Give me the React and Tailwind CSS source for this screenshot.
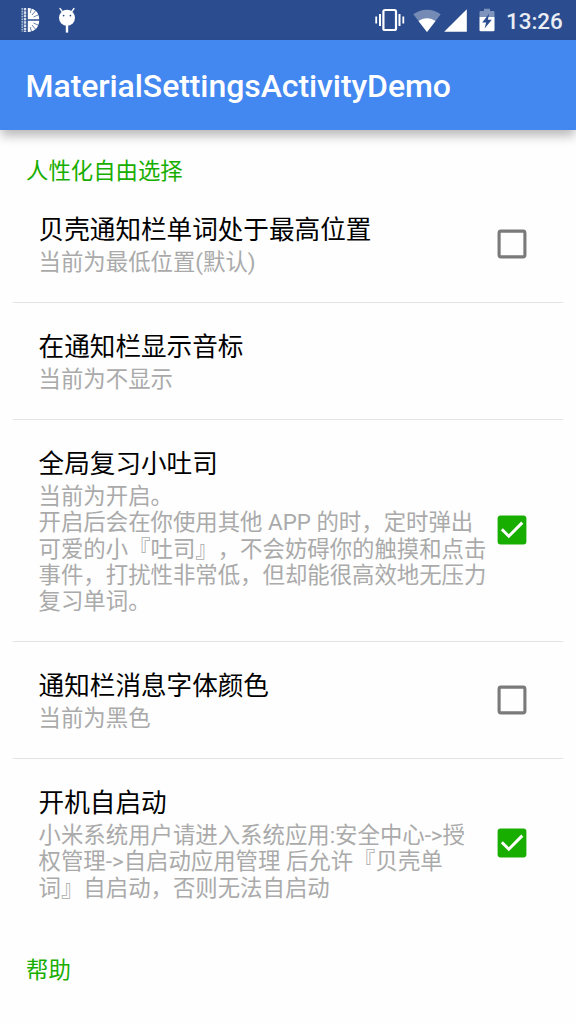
import React, { useState } from "react";

const initialSettings = [
  {
    id: 'top',
    title: '贝壳通知栏单词处于最高位置',
    summary: ['当前为最低位置(默认)'],
    checked: false,
  },
  {
    id: 'phonetic',
    title: '在通知栏显示音标',
    summary: ['当前为不显示'],
  },
  {
    id: 'toast',
    title: '全局复习小吐司',
    summary: [
      '当前为开启。',
      '开启后会在你使用其他 APP 的时，定时弹出',
      '可爱的小『吐司』，不会妨碍你的触摸和点击',
      '事件，打扰性非常低，但却能很高效地无压力',
      '复习单词。',
    ],
    checked: true,
  },
  {
    id: 'color',
    title: '通知栏消息字体颜色',
    summary: ['当前为黑色'],
    checked: false,
  },
  {
    id: 'boot',
    title: '开机自启动',
    summary: [
      '小米系统用户请进入系统应用:安全中心->授',
      '权管理->自启动应用管理 后允许『贝壳单',
      '词』自启动，否则无法自启动',
    ],
    checked: true,
  },
];

const ShellIcon = () => (
  <svg width="20" height="26" viewBox="0 0 20 26" fill="none" stroke="white">
    <path d="M1.2 1v24" strokeWidth="1.4" strokeDasharray="1.8 0.8" opacity="0.65" />
    <path d="M4 1v24" strokeWidth="2.4" strokeDasharray="2.6 0.7" opacity="0.8" />
    <path d="M6.8 1C14 1 18.2 6 18.2 12.2H6.8z" fill="white" stroke="none" />
    <path d="M6.8 13.8H18.2C18 20 14 25 6.8 25z" fill="white" stroke="none" />
    <path
      d="M9.2 6L10.6 1M11 8L15 3.2M12.5 10L18 7.5M9.2 20L10.6 25M11 18L15 22.8M12.5 16L18 18.5"
      stroke="#2b4d8f"
      strokeWidth="0.7"
    />
  </svg>
);

const AndroidHeadIcon = () => (
  <svg width="18" height="26" viewBox="0 0 18 26">
    <path d="M2 1.5L5 5.5M16 1.5L13 5.5" stroke="white" strokeWidth="1.3" strokeLinecap="round" />
    <circle cx="9" cy="10.8" r="8" fill="white" />
    <circle cx="5.6" cy="8.6" r="0.9" fill="#2b4d8f" />
    <circle cx="12.4" cy="8.6" r="0.9" fill="#2b4d8f" />
    <path d="M9 18v7.6" stroke="white" strokeWidth="2.4" />
  </svg>
);

const VibrateIcon = () => (
  <svg width="30" height="24" viewBox="0 0 30 24" fill="none" stroke="white">
    <rect x="8.4" y="2" width="12.6" height="20" rx="1.5" strokeWidth="2.2" />
    <path d="M5 6v12M24.5 6v12" strokeWidth="2" />
    <path d="M1.2 8.5v7M28.3 8.5v7" strokeWidth="1.8" />
  </svg>
);

const WifiIcon = () => (
  <svg width="28" height="23" viewBox="0 0 28 23" fill="white">
    <path d="M14 23L0.3 5.3C4 2.4 8.8 0.7 14 0.7s10 1.7 13.7 4.6z" opacity="0.35" />
    <path d="M14 23L5.5 12.1C7.8 10.3 10.7 9.2 14 9.2s6.2 1.1 8.5 2.9z" />
  </svg>
);

const SignalIcon = () => (
  <svg width="23" height="23" viewBox="0 0 23 23" fill="white">
    <path d="M22.8 0.2v22.6H0.2z" />
  </svg>
);

const BatteryIcon = () => (
  <svg width="16" height="24" viewBox="0 0 16 24" fill="white">
    <path d="M0.5 9V4.3q0-1.3 1.3-1.3H5V0.7h6V3h3.2q1.3 0 1.3 1.3V9z" opacity="0.4" />
    <path d="M0.5 9h15v13.2q0 1.1-1.3 1.1H1.8q-1.3 0-1.3-1.1z" />
    <path d="M10.2 5.5L3.2 14.4h3.9l-1.5 6.2 7.2-8.8H8.9z" fill="#2b4d8f" />
  </svg>
);

const Checkbox = ({ checked }) => (
  <svg width="30" height="30" viewBox="0 0 30 30" fill="none" className="shrink-0 -mt-[3px]">
    {checked ? (
      <>
        <rect x="0.6" y="0.6" width="28.8" height="28.8" rx="3" fill="#18ae00" />
        <path d="M4.8 14.3l7 6.9L25.3 7.6" stroke="white" strokeWidth="3" />
      </>
    ) : (
      <rect x="2.1" y="2.1" width="25.8" height="25.8" rx="1.8" stroke="#7a7a7a" strokeWidth="3.1" />
    )}
  </svg>
);

const SectionHeader = ({ title }) => (
  <h2 className="h-[56.6px] pt-[28.4px] pl-[26px] text-[22.4px] leading-[26px] text-[#18ae00]">{title}</h2>
);

const SettingRow = ({ item, last, onToggle }) => (
  <div
    onClick={() => onToggle(item.id)}
    className={`mx-[13px] flex items-center justify-between pl-[25.6px] pr-[36px] pt-[29px] cursor-pointer ${
      last ? 'pb-[27.6px]' : 'pb-[26.4px] border-b border-[#e4e4e4]'
    }`}
  >
    <div className="whitespace-nowrap">
      <h3 className="text-[25.6px] leading-[30px] text-black">{item.title}</h3>
      <div className="mt-[4px] text-[22.4px] leading-[26.4px] text-[#aaaaaa] [text-spacing-trim:space-all]">
        {item.summary.map((line) => (
          <p key={line}>{line}</p>
        ))}
      </div>
    </div>
    {item.checked !== undefined && <Checkbox checked={item.checked} />}
  </div>
);

const App = () => {
  const [settings, setSettings] = useState(initialSettings);

  const handleToggle = (id) => {
    setSettings(
      settings.map((item) =>
        item.id === id && item.checked !== undefined ? { ...item, checked: !item.checked } : item
      )
    );
  };

  return (
    <div className="w-[576px] h-[1024px] overflow-hidden bg-[#fefefe] font-['Roboto','Noto_Sans_CJK_SC',sans-serif]">
      {/* Status bar */}
      <div className="h-10 flex items-center justify-between bg-[#2b4d8f] pl-[21px] pr-[13px]">
        <div className="flex items-center gap-[17px]">
          <ShellIcon />
          <AndroidHeadIcon />
        </div>
        <div className="flex items-center">
          <VibrateIcon />
          <div className="ml-[8px] flex items-center gap-[3px]">
            <WifiIcon />
            <SignalIcon />
          </div>
          <div className="ml-[12px]">
            <BatteryIcon />
          </div>
          <span className="ml-[11px] pt-[2px] w-[57px] text-[22.4px] leading-6 font-medium text-[#eaedf4] whitespace-nowrap">13:26</span>
        </div>
      </div>

      {/* Toolbar */}
      <header className="h-[89.6px] flex items-center bg-[#4387f1] pl-[25.6px] pt-[3px] shadow-[0_7px_10px_-1px_rgba(0,0,0,0.27)]">
        <h1 className="text-[32px] leading-[38px] font-medium tracking-[-0.08px] text-white">MaterialSettingsActivityDemo</h1>
      </header>

      <main>
        <SectionHeader title="人性化自由选择" />
        {settings.map((item, index) => (
          <SettingRow
            key={item.id}
            item={item}
            last={index === settings.length - 1}
            onToggle={handleToggle}
          />
        ))}
        <SectionHeader title="帮助" />
      </main>
    </div>
  );
};

export default App;
